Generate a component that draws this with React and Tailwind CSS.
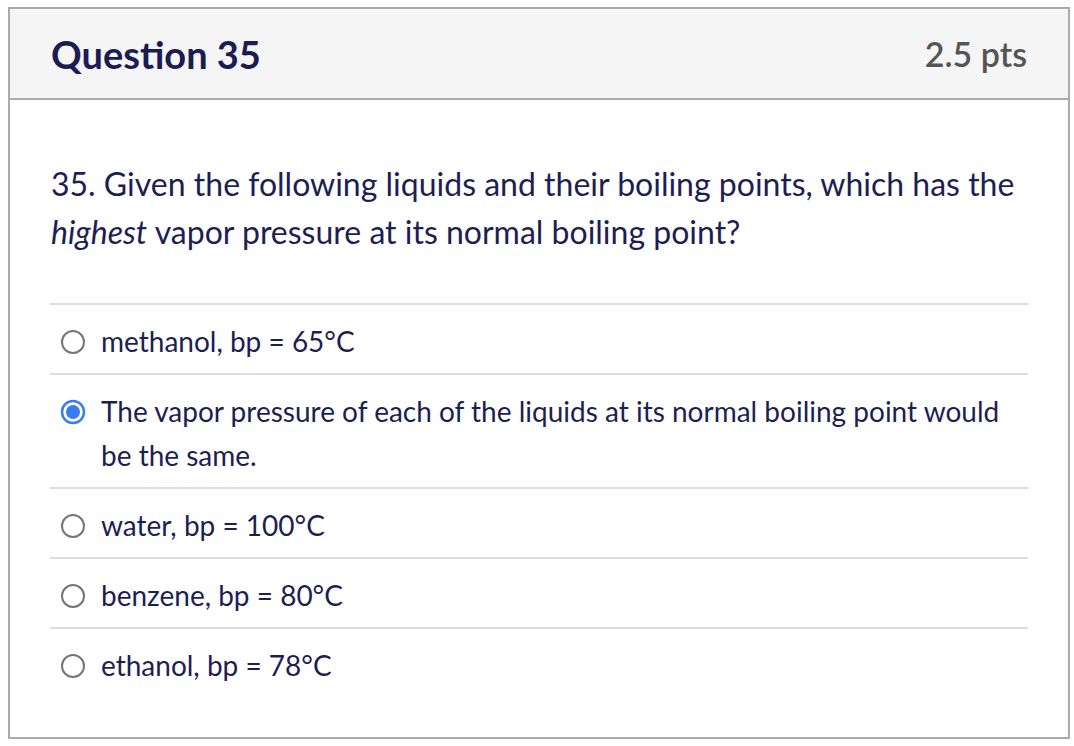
import React from "react";

const answers = [
  { text: "methanol, bp = 65°C", checked: false },
  { text: "The vapor pressure of each of the liquids at its normal boiling point would be the same.", checked: true },
  { text: "water, bp = 100°C", checked: false },
  { text: "benzene, bp = 80°C", checked: false },
  { text: "ethanol, bp = 78°C", checked: false },
];

function Radio({ checked }) {
  return (
    <svg width="26" height="26" viewBox="0 0 26 26" className="shrink-0 mt-[10px]">
      {checked ? (
        <>
          <circle cx="13" cy="13" r="11" fill="white" stroke="#3a7cf0" strokeWidth="2.5" />
          <circle cx="13" cy="13" r="7" fill="#3a7cf0" />
        </>
      ) : (
        <circle cx="13" cy="13" r="11" fill="white" stroke="#757575" strokeWidth="2" />
      )}
    </svg>
  );
}

export default function App() {
  return (
    <div className="w-[1074px] h-[746px] bg-white pt-[7px] pl-[8px]" style={{ fontFamily: "Lato, 'Open Sans', sans-serif" }}>
      <div className="w-[1062px] h-[732px] border-2 border-[#aaaaaa] flex flex-col">
        <div className="h-[91px] bg-[#f5f5f5] border-b-2 border-[#aaaaaa] flex items-center justify-between px-[41px]">
          <div className="text-[38px] font-bold text-[#1c1c55] leading-none">Question 35</div>
          <div className="text-[34px] font-semibold text-[#555555] leading-none">2.5 pts</div>
        </div>
        <div className="px-[40px] pt-[60px]">
          <p className="text-[32px] leading-[48px] text-[#1e1e55] pl-[1px]">
            35. Given the following liquids and their boiling points, which has the <em>highest</em> vapor pressure at its normal boiling point?
          </p>
          <div className="mt-[47px] border-t-2 border-[#dddddd]">
            {answers.map((a, i) => (
              <div
                key={i}
                className={`flex gap-[15px] pl-[10px] pt-[14px] pb-[10px] ${i < answers.length - 1 ? "border-b-2 border-[#dddddd]" : ""}`}
              >
                <Radio checked={a.checked} />
                <div className="text-[28px] leading-[44px] text-[#1e1e55]">{a.text}</div>
              </div>
            ))}
          </div>
        </div>
      </div>
    </div>
  );
}
